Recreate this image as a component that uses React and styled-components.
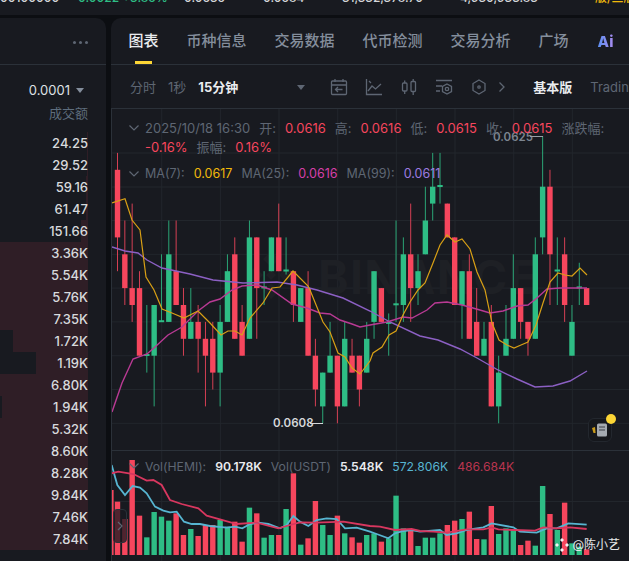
import React from "react";
import styled, { createGlobalStyle } from "styled-components";

const FONT = `Inter, "Noto Sans CJK SC", sans-serif`;
const RED = "#f6465d";
const GREEN = "#2ebd85";

const GlobalStyle = createGlobalStyle`
  html, body { margin: 0; padding: 0; background: #0c0e12; }
  * { box-sizing: border-box; }
`;

const Page = styled.div`
  width: 629px;
  height: 561px;
  overflow: hidden;
  display: flex;
  flex-direction: column;
  gap: 3px;
  background: #0c0e12;
  font-family: ${FONT};
`;

const TopStrip = styled.div`
  height: 15px;
  flex: none;
  background: #181a20;
  overflow: hidden;
  position: relative;
`;

const TopRow = styled.div`
  display: flex;
  margin-top: -9px;
  height: 14px;
  line-height: 14px;
  font-size: 12px;
  font-weight: 500;
  white-space: nowrap;
  color: #d5d7da;
`;

const TopCell = styled.span`
  flex: none;
  width: ${(p) => p.$w}px;
  color: ${(p) => p.$color || "inherit"};
`;

const Main = styled.div`
  flex: 1;
  display: flex;
  gap: 5px;
  min-height: 0;
`;

const BookPanel = styled.aside`
  width: 106px;
  flex: none;
  background: #181a20;
  border-radius: 0 10px 0 0;
  overflow: hidden;
`;

const BookHead = styled.div`
  height: 47px;
  border-bottom: 1px solid #2b3139;
  display: flex;
  justify-content: flex-end;
  align-items: center;
  padding: 3px 18px 0 0;
  gap: 3px;
`;

const Dot = styled.i`
  width: 3px;
  height: 3px;
  border-radius: 50%;
  background: #5e6673;
`;

const TickRow = styled.div`
  height: 43px;
  display: flex;
  justify-content: flex-end;
  align-items: center;
  padding: 6px 22px 0 0;
  font-size: 13px;
  font-weight: 400;
  color: #dfe1e4;
  gap: 6px;
`;

const Caret = styled.i`
  width: 0;
  height: 0;
  border-left: 4px solid transparent;
  border-right: 4px solid transparent;
  border-top: 5px solid #848e9c;
  margin-top: 1px;
`;

const BookLabel = styled.div`
  height: 20px;
  margin-top: -5px;
  padding-right: 18px;
  text-align: right;
  font-size: 13px;
  line-height: 20px;
  color: #5e6d7d;
`;

const BookRows = styled.div`
  margin-top: 9px;
  width: 88px;
`;

const BookRow = styled.div`
  position: relative;
  height: 22px;
  line-height: 22px;
  text-align: right;
  font-size: 13px;
  font-weight: 500;
  color: #d8dadd;
`;

const Depth = styled.div`
  position: absolute;
  top: 0;
  right: 0;
  bottom: 0;
  background: #2f1e26;
`;

const BookValue = styled.span`
  position: relative;
`;

const ChartPanel = styled.section`
  flex: 1;
  min-width: 0;
  background: #181a20;
  border-radius: 10px 0 0 0;
  overflow: hidden;
  display: flex;
  flex-direction: column;
`;

const TabBar = styled.nav`
  height: 47px;
  flex: none;
  border-bottom: 1px solid #2b3139;
  display: flex;
  align-items: center;
  padding: 0 0 0 17.5px;
  gap: 28px;
  white-space: nowrap;
`;

const Tab = styled.div`
  position: relative;
  font-size: 15px;
  font-weight: 500;
  height: 46px;
  line-height: 46px;
  color: ${(p) => (p.$active ? "#eaecef" : "#848e9c")};

  ${(p) =>
    p.$active &&
    `&::after {
      content: "";
      position: absolute;
      left: 6px;
      width: 17px;
      bottom: 0;
      height: 3px;
      background: #fcd535;
    }`}
`;

const AiBadge = styled.div`
  margin-left: 1px;
  font-size: 15px;
  font-weight: 800;
  background: linear-gradient(90deg, #5d8ff0, #a78cf0);
  -webkit-background-clip: text;
  background-clip: text;
  color: transparent;
`;

const ToolBar = styled.div`
  height: 44px;
  flex: none;
  border-bottom: 1px solid #2b3139;
  display: flex;
  align-items: center;
  padding-left: 19px;
  white-space: nowrap;
  overflow: hidden;
  font-size: 13px;
`;

const Interval = styled.span`
  margin-right: 12px;
  color: ${(p) => (p.$active ? "#eaecef" : "#5e6673")};
  font-weight: ${(p) => (p.$active ? 700 : 400)};
`;

const ToolCaret = styled(Caret)`
  margin-left: 47px;
  border-top-color: #5e6673;
`;

const ToolIcons = styled.div`
  margin-left: 25px;
  display: flex;
  gap: 17px;
  align-items: center;
`;

const Version = styled.span`
  margin-left: ${(p) => p.$ml}px;
  color: ${(p) => (p.$active ? "#eaecef" : "#5e6673")};
  font-weight: ${(p) => (p.$active ? 700 : 400)};
`;

const ChartArea = styled.div`
  position: relative;
  flex: 1;
  min-height: 0;
  border-left: 1px solid #2b3139;
`;

const ChartSvg = styled.svg`
  display: block;
  width: 517px;
  height: 452px;
`;

const Legend = styled.div`
  position: absolute;
  top: ${(p) => p.$top}px;
  left: 33px;
  display: flex;
  gap: 9px;
  font-size: ${(p) => p.$size || 13}px;
  line-height: 18px;
  white-space: nowrap;
  color: #5e6673;
`;

const LegendValue = styled.span`
  color: ${(p) => p.$color};
  font-weight: ${(p) => p.$weight || 400};
`;

const Chevron = styled.svg`
  position: absolute;
  left: 17px;
  top: ${(p) => p.$top}px;
  width: 10px;
  height: 6px;
`;

const PaneHandle = styled.div`
  position: absolute;
  left: 1px;
  top: 400px;
  width: 14px;
  height: 34px;
  border: 1px solid #2b3139;
  border-radius: 4px;
  background: rgba(24, 26, 32, 0.75);
  display: flex;
  align-items: center;
  justify-content: center;
`;

const NoteButton = styled.div`
  position: absolute;
  left: 476px;
  top: 309px;
  width: 24px;
  height: 24px;
  border: 1px solid #23272e;
  border-radius: 6px;
  background: #15171c;
  display: flex;
  align-items: center;
  justify-content: center;

  &::after {
    content: "";
    position: absolute;
    right: -5px;
    top: -5px;
    width: 10px;
    height: 10px;
    border-radius: 50%;
    background: #fcd535;
  }
`;

const Credit = styled.div`
  position: absolute;
  right: 9px;
  bottom: 8px;
  display: flex;
  align-items: center;
  gap: 3px;
  font-size: 12px;
  line-height: 16px;
  color: #e6e8ea;
`;

const depths = [
  ["24.25", 1], ["29.52", 1], ["59.16", 2], ["61.47", 2], ["151.66", 7],
  ["3.36K", 88], ["5.54K", 88], ["5.76K", 88], ["7.35K", 88], ["1.72K", 75],
  ["1.19K", 52], ["6.80K", 88], ["1.94K", 86], ["5.32K", 88], ["8.60K", 88],
  ["8.28K", 88], ["9.84K", 88], ["7.46K", 88], ["7.84K", 88],
];

// open, close, high, low in price ticks (0.0001)
const candles = [
  [623,619,624,617],[618,616,620,615],[616,615,621,614],[616,612,617,612],[612,612.1,615,611],
  [612,615,615,609],[614,614.1,618,614],[614,618,620,614],[617,615,620,615],[615,613,616,612],
  [613,614,616,613],[614,613,615,611],[613,612,614,609],[613,611,614,610],[611,614,615,609],
  [614,617,618,614],[618,613,619,613],[614,612,615,612],[613,619,620,613],[619,616,619,613],
  [616,616.1,617,615],[617,619,619,617],[619,617,621,617],[617,617.1,619,616.8],[617,615,617,614],
  [614,616,616,614],[616,612,617,612],[612,610,613,609],[609,611,611,608],[611,612,614,611],
  [612,609,612,608],[609,613,614,609],[612,611,613,611],[612,610,612,609],[611,613,614,611],
  [614,617,617,613],[616,614,616,614],[613.9,614,614.5,612],[615,615.1,620,614],[615,618,619,614],
  [618,616,621,614],[616,617,618,615],[618,620,622,618],[621,622,624,620],[622,622.1,624,621],
  [621,619,621,619],[619,615,619,615],[615,617,617,613],[617,613,618,613],[614,612,616,612],
  [612,613,614,612],[614,609,615,609],[609,611,612,608],[612,613,615,612],[613,616,618,613],
  [616,614,616,613],[614,613,614,612],[613,618,619,613],[619,622,625,618],[622,618,623,615],
  [617,617.1,619,615],[618,615,619,614],[612,614,615,612],[616,616.1,617.5,615],[616,615,616,615],
];

const volTops = [
  155,207,30,197,262,186,200,212,190,255,237,258,225,225,210,230,215,275,173,190,263,255,255,177,70,284,265,153,225,255,197,250,262,278,255,
  250,275,265,137,235,240,288,263,263,250,225,212,207,185,267,268,168,252,235,240,285,272,287,108,192,240,158,280,290,298,
];

const ma7 = [[112,203],[125,198.7],[132,220],[140,230],[146,277],[154,290],[162,309],[172,313],[184,318],[198,311],[210,323],[221,335],[228,331],[235,331],[242,335],[250,318],[263,303],[272,288],[280,287],[293,271],[308,286],[310,290],[323,322],[330,332],[338,353],[345,357],[352,368],[360,374],[370,361],[373,353],[382,347],[389,335],[396,331],[403,315],[410,302],[418,290],[425,283],[433,263],[440,245],[447,235],[455,242],[462,239],[470,249],[477,272],[485,290],[492,323],[499,340],[507,345],[514,348],[521,345],[528,342],[536,325],[543,303],[550,282],[558,273],[565,275],[572,276],[580,268],[587,275]];
const ma25 = [[112,412],[122,383],[133,359],[147,354],[155,347],[168,335],[182,327],[198,311],[210,302],[220,299],[232,290],[242,286],[257,285],[272,290],[292,304],[307,308],[320,313],[330,314],[340,320],[352,324],[360,327],[370,325],[387,322],[403,317],[412,318],[427,310],[435,303],[447,302],[462,305],[473,308],[490,313],[503,311],[517,306],[528,305],[537,298],[547,289],[560,288],[587,288]];
const ma99 = [[112,247],[125,251],[138,253],[147,260],[162,268],[190,274],[213,280],[243,283],[277,282],[297,285],[317,290],[343,298],[370,311],[390,322],[420,336],[438,340],[460,349],[477,358],[498,370],[517,379],[535,387],[553,386],[570,381],[587,371]];

// volume averages, read off as x/y offsets in two 3x crops
const from7 = (pts) => pts.map(([x, y]) => [110 + x / 3, 450 + y / 3]);
const from8 = (pts) => pts.map(([x, y]) => [370 + x / 3, 450 + y / 3]);
const volBlue = [
  ...from7([[5,45],[22,105],[45,135],[68,108],[90,113],[110,130],[135,170],[160,182],[180,187],[200,185],[222,215],[245,222],[270,222],[300,228],[350,233],[375,230],[397,235],[420,222],[445,218],[475,222],[510,235],[530,225],[550,198],[570,215],[595,228],[620,210],[650,205],[680,207],[705,235],[740,233]]),
  ...from8([[0,245],[20,252],[55,265],[75,250],[100,243],[125,240],[150,245],[210,240],[230,255],[260,250],[290,240],[340,232],[365,220],[430,232],[450,245],[500,248],[530,235],[560,235],[595,220],[650,224]]),
];
const volRed = [
  ...from7([[5,70],[25,65],[70,72],[110,92],[130,90],[155,105],[180,150],[215,162],[265,175],[290,197],[330,208],[380,222],[440,218],[505,235],[540,225],[570,217],[620,218],[700,215]]),
  ...from8([[0,228],[30,230],[75,240],[125,237],[150,243],[190,245],[230,248],[290,238],[340,238],[365,232],[385,238],[430,240],[495,242],[520,232],[560,235],[600,232],[650,237]]),
];

const priceY = (t) => 423.3 - (t - 608) * 16.9;
const candleX = (i) => 117.5 + 7.33 * i;
const toPoints = (pts) => pts.map((p) => p.join(",")).join(" ");

const gridX = [103.3, 161.7, 220.4, 279, 337.7, 396.3, 455, 513.7, 572.3];
const gridY = [153, 187, 220.5, 254.3, 288.1, 321.9, 355.7, 389.5, 423.3];

const ChartDrawing = () => (
  <ChartSvg viewBox="112 109 517 452">
    {gridX.map((x) => (
      <line key={x} x1={x} x2={x} y1="109" y2="561" stroke="#22262c" />
    ))}
    {gridY.map((y) => (
      <line key={y} x1="112" x2="629" y1={y} y2={y} stroke="#22262c" />
    ))}
    <line x1="112" x2="629" y1="501.5" y2="501.5" stroke="#22262c" />

    <g fill="#1e2025">
      <path d="M271 251l8 8-8 8-8-8zM255 267l8 8-8 8-8-8zM287 267l8 8-8 8-8-8zM271 283l8 8-8 8-8-8zM271 270l5 5-5 5-5-5z" />
      <text x="318" y="294" fontFamily="Inter, sans-serif" fontSize="46" fontWeight="700" letterSpacing="1.5">BINANCE</text>
    </g>

    {candles.map(([o, c, h, l], i) => {
      const up = c >= o;
      const color = up ? GREEN : RED;
      const x = candleX(i);
      const top = priceY(Math.max(o, c));
      const bottom = priceY(Math.min(o, c));
      return (
        <g key={i}>
          <line x1={x} x2={x} y1={priceY(h)} y2={priceY(l)} stroke={color} strokeOpacity="0.85" />
          <rect x={x - 2.7} y={top} width="5.4" height={Math.max(bottom - top, 2)} fill={color} />
        </g>
      );
    })}

    <polyline points={toPoints(ma99)} fill="none" stroke="#8c60c4" strokeWidth="1.4" />
    <polyline points={toPoints(ma25)} fill="none" stroke="#b93a94" strokeWidth="1.4" />
    <polyline points={toPoints(ma7)} fill="none" stroke="#d9a015" strokeWidth="1.2" />

    <text x="493" y="141" fontFamily="Inter, sans-serif" fontSize="11.5" fontWeight="600" fill="#7d8590">0.0625</text>
    <line x1="530" x2="543" y1="136.5" y2="136.5" stroke="#9aa0a8" />
    <text x="273" y="427" fontFamily="Inter, sans-serif" fontSize="11.5" fontWeight="600" fill="#d5d7da">0.0608</text>
    <line x1="310" x2="323" y1="423.5" y2="423.5" stroke="#d5d7da" />

    <line x1="112" x2="629" y1="450.5" y2="450.5" stroke="#2b3139" />
    <rect x="112" y={450 + 120 / 3} width="1.6" height={(315 - 120) / 3} fill={RED} />
    {volTops.map((t, i) => {
      const open = candles[i][0];
      const close = candles[i][1];
      return (
        <rect
          key={i}
          x={candleX(i) - 2.7}
          y={450 + t / 3}
          width="5.4"
          height={555 - (450 + t / 3)}
          fill={close >= open ? GREEN : RED}
        />
      );
    })}
    <polyline points={toPoints(volBlue)} fill="none" stroke="#57b5d1" strokeWidth="1.8" />
    <polyline points={toPoints(volRed)} fill="none" stroke="#d8375f" strokeWidth="1.8" />
  </ChartSvg>
);

const Stroke = { fill: "none", stroke: "#5e6673", strokeWidth: 1.3 };

const CalendarIcon = () => (
  <svg width="18" height="18" viewBox="0 0 18 18" {...Stroke}>
    <rect x="1.5" y="3" width="15" height="13.5" rx="1" />
    <path d="M1.5 7h15M5 1v3M13 1v3M12.5 11.5h-7M8 9l-2.5 2.5L8 14" />
  </svg>
);
const LineIcon = () => (
  <svg width="18" height="18" viewBox="0 0 18 18" {...Stroke}>
    <path d="M1.5 1v15.5H17M3 13l4-5 3.5 3L16 6" />
    <path d="M4 3l2 2" />
  </svg>
);
const CandleIcon = () => (
  <svg width="18" height="18" viewBox="0 0 18 18" {...Stroke}>
    <rect x="2.5" y="5" width="4.5" height="8" rx="1" />
    <rect x="11" y="3.5" width="4.5" height="10" rx="1" />
    <path d="M4.7 2.5V5M4.7 13v3M13.2 1v2.5M13.2 13.5V17" />
  </svg>
);
const LayoutIcon = () => (
  <svg width="18" height="18" viewBox="0 0 18 18" {...Stroke}>
    <path d="M1 2.5h16M1 8h6M1 13h4" />
    <path d="M12 6l4.5 2.5v5L12 16l-4.5-2.5v-5z" />
    <circle cx="12" cy="11" r="1.7" />
  </svg>
);
const HexIcon = () => (
  <svg width="18" height="18" viewBox="0 0 18 18" {...Stroke}>
    <path d="M9 2l6 3.5v7L9 16l-6-3.5v-7z" />
    <circle cx="9" cy="9" r="1.2" />
  </svg>
);
const MoreIcon = () => (
  <svg width="8" height="12" viewBox="0 0 8 12" {...Stroke} style={{ marginLeft: -7 }}>
    <path d="M1.5 1.5L6 6l-4.5 4.5" />
  </svg>
);

const DownChevron = ({ top }) => (
  <Chevron $top={top} viewBox="0 0 10 6" fill="none" stroke="#5e6673" strokeWidth="1.2">
    <path d="M0.5 0.5L5 5l4.5-4.5" />
  </Chevron>
);

const App = () => (
  <Page>
    <GlobalStyle />
    <TopStrip>
      <TopRow>
        <TopCell $w={78}>00100000</TopCell>
        <TopCell $w={106} $color={GREEN}>0.0022 +3.85%</TopCell>
        <TopCell $w={79}>0.0635</TopCell>
        <TopCell $w={79}>0.0584</TopCell>
        <TopCell $w={118}>31,332,378.70</TopCell>
        <TopCell $w={135}>4,930,933.83</TopCell>
        <TopCell $w={60} $color="#f0b90b">版/三版</TopCell>
      </TopRow>
    </TopStrip>

    <Main>
      <BookPanel>
        <BookHead>
          <Dot />
          <Dot />
          <Dot />
        </BookHead>
        <TickRow>
          0.0001
          <Caret />
        </TickRow>
        <BookLabel>成交额</BookLabel>
        <BookRows>
          {depths.map(([value, depth]) => (
            <BookRow key={value}>
              <Depth style={{ width: depth }} />
              <BookValue>{value}</BookValue>
            </BookRow>
          ))}
        </BookRows>
      </BookPanel>

      <ChartPanel>
        <TabBar>
          <Tab $active>图表</Tab>
          <Tab>币种信息</Tab>
          <Tab>交易数据</Tab>
          <Tab>代币检测</Tab>
          <Tab>交易分析</Tab>
          <Tab>广场</Tab>
          <AiBadge>Ai</AiBadge>
        </TabBar>

        <ToolBar>
          <Interval>分时</Interval>
          <Interval>1秒</Interval>
          <Interval $active>15分钟</Interval>
          <ToolCaret />
          <ToolIcons>
            <CalendarIcon />
            <LineIcon />
            <CandleIcon />
            <LayoutIcon />
            <HexIcon />
            <MoreIcon />
          </ToolIcons>
          <Version $active $ml={27}>基本版</Version>
          <Version $ml={18}>TradingView</Version>
        </ToolBar>

        <ChartArea>
          <ChartDrawing />

          <DownChevron top={16} />
          <Legend $top={10}>
            <span>2025/10/18 16:30</span>
            <span>开:</span>
            <LegendValue $color={RED}>0.0616</LegendValue>
            <span>高:</span>
            <LegendValue $color={RED}>0.0616</LegendValue>
            <span>低:</span>
            <LegendValue $color={RED}>0.0615</LegendValue>
            <span>收:</span>
            <LegendValue $color={RED}>0.0615</LegendValue>
            <span>涨跌幅:</span>
          </Legend>
          <Legend $top={29}>
            <LegendValue $color={RED}>-0.16%</LegendValue>
            <span>振幅:</span>
            <LegendValue $color={RED}>0.16%</LegendValue>
          </Legend>

          <DownChevron top={62} />
          <Legend $top={56} $size={12.5}>
            <span>MA(7):</span>
            <LegendValue $color="#f0b90b">0.0617</LegendValue>
            <span>MA(25):</span>
            <LegendValue $color="#d63fa8">0.0616</LegendValue>
            <span>MA(99):</span>
            <LegendValue $color="#9c7ce0">0.0611</LegendValue>
          </Legend>

          <DownChevron top={354} />
          <Legend $top={349} $size={12.2}>
            <span>Vol(HEMI):</span>
            <LegendValue $color="#eaecef" $weight={600}>90.178K</LegendValue>
            <span>Vol(USDT)</span>
            <LegendValue $color="#eaecef" $weight={600}>5.548K</LegendValue>
            <LegendValue $color="#57b5d1">572.806K</LegendValue>
            <LegendValue $color="#b8354f">486.684K</LegendValue>
          </Legend>

          <PaneHandle>
            <svg width="6" height="10" viewBox="0 0 6 10" fill="none" stroke="#5e6673" strokeWidth="1.2">
              <path d="M1 1l4 4-4 4" />
            </svg>
          </PaneHandle>

          <NoteButton>
            <svg width="16" height="14" viewBox="0 0 16 14">
              <path d="M0 5l3-1 .6 6H1.5z" fill="#c99a1a" />
              <rect x="5" y="0.5" width="10" height="13" rx="1.5" fill="#a4a9b0" />
              <path d="M7 4h6M7 7h6" stroke="#3a3e45" strokeWidth="1.2" />
            </svg>
          </NoteButton>

          <Credit>
            <svg width="14" height="14" viewBox="0 0 14 14" fill="#f1f2f3">
              <path d="M7 0l2 2-2 2-2-2zM2 5l2 2-2 2-2-2zM12 5l2 2-2 2-2-2zM7 10l2 2-2 2-2-2z" />
            </svg>
            <span>@陈小艺</span>
          </Credit>
        </ChartArea>
      </ChartPanel>
    </Main>
  </Page>
);

export default App;
